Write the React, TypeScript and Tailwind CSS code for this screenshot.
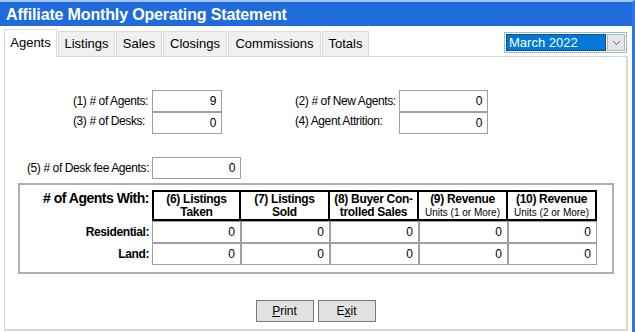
import * as React from "react";

const tabs = [
  { label: "Agents", w: "w-[53px]" },
  { label: "Listings", w: "w-[57px]" },
  { label: "Sales", w: "w-[46px]" },
  { label: "Closings", w: "w-[64px]" },
  { label: "Commissions", w: "w-[93px]" },
  { label: "Totals", w: "w-[47px]" },
];

const headers: { top: string; bottom: string; small?: boolean }[] = [
  { top: "(6) Listings", bottom: "Taken" },
  { top: "(7) Listings", bottom: "Sold" },
  { top: "(8) Buyer Con-", bottom: "trolled Sales" },
  { top: "(9) Revenue", bottom: "Units (1 or More)", small: true },
  { top: "(10) Revenue", bottom: "Units (2 or More)", small: true },
];

function NumBox({ value, className }: { value: string; className: string }) {
  return (
    <div
      className={`h-[22px] border border-[#a0a0a0] bg-white text-right pr-[5px] text-[12px] leading-[20px] text-black ${className}`}
    >
      {value}
    </div>
  );
}

export default function App() {
  const [tab, setTab] = React.useState("Agents");

  return (
    <div className="w-[635px] h-[332px] bg-white border-t-2 border-t-[#9fc5f0] border-r-[3px] border-r-[#2a75e0] font-['Liberation_Sans',Arial,sans-serif] text-black overflow-hidden">
      {/* title bar */}
      <div className="h-[24px] bg-[#1f6bdc] pl-[6px] pt-[1px] text-white font-bold text-[16px] leading-[24px] tracking-[-0.15px]">
        Affiliate Monthly Operating Statement
      </div>

      {/* tabs + month */}
      <div className="h-[30px] flex items-end pl-[4px] pr-[5px]">
        <div className="flex items-end gap-[1px]">
          {tabs.map((t) =>
            t.label === tab ? (
              <button
                key={t.label}
                onClick={() => setTab(t.label)}
                className={`${t.w} h-[28px] -mb-px relative z-10 bg-white border border-b-0 border-[#d9d9d9] text-[13px] leading-[25px] pb-[2px] text-center`}
              >
                {t.label}
              </button>
            ) : (
              <button
                key={t.label}
                onClick={() => setTab(t.label)}
                className={`${t.w} h-[25px] bg-[#f0f0f0] border border-b-0 border-[#d9d9d9] text-[13px] leading-[24px] text-center`}
              >
                {t.label}
              </button>
            )
          )}
        </div>
        <div className="ml-auto self-start mt-[6px] flex h-[21px] w-[123px] border border-[#8cbcec] bg-white">
          <div className="flex-1 m-[1px] bg-[#0078d7] border border-dotted border-[#222] text-white text-[13px] leading-[15px] pl-[2px]">
            March 2022
          </div>
          <div className="w-[18px] my-[1px] mr-[1px] bg-[#e5e5e5] border border-[#b5b5b5] flex items-center justify-center">
            <svg width="9" height="6" viewBox="0 0 9 6">
              <path d="M1 1l3.5 3.5L8 1" fill="none" stroke="#606060" strokeWidth="1" />
            </svg>
          </div>
        </div>
      </div>

      {/* panel */}
      <div className="ml-[4px] w-[624px] h-[275px] border border-r-2 border-b-2 border-[#d7d7d7] pt-[33px] flex flex-col">
        {/* rows 1-4 */}
        <div className="flex text-[12px] tracking-[-0.4px]">
          <div className="ml-[68px] flex flex-col">
            <div className="flex">
              <div className="w-[79px] leading-[22px]">(1) # of Agents:</div>
              <NumBox value="9" className="w-[70px]" />
            </div>
            <div className="flex">
              <div className="w-[79px] leading-[18px] self-start">(3) # of Desks:</div>
              <NumBox value="0" className="w-[70px]" />
            </div>
          </div>
          <div className="ml-[73px] flex flex-col">
            <div className="flex">
              <div className="w-[104px] leading-[22px]">(2) # of New Agents:</div>
              <NumBox value="0" className="w-[89px]" />
            </div>
            <div className="flex">
              <div className="w-[104px] leading-[18px] self-start">(4) Agent Attrition:</div>
              <NumBox value="0" className="w-[89px]" />
            </div>
          </div>
        </div>

        {/* row 5 */}
        <div className="flex mt-[23px] ml-[22px] text-[12px] tracking-[-0.4px]">
          <div className="w-[125px] leading-[22px]">(5) # of Desk fee Agents:</div>
          <NumBox value="0" className="w-[89px]" />
        </div>

        {/* agents with group */}
        <div className="mt-[4px] ml-[13px] w-[596px] border-2 border-[#b0b0b0] pt-[5px] pb-[7px]">
          <div className="grid grid-cols-[132px_repeat(5,89px)]">
            <div className="text-right pr-[3px] font-bold text-[14px] leading-[16px] tracking-[-0.5px]">
              # of Agents With:
            </div>
            {headers.map((h, i) => (
              <div
                key={h.top}
                className={`h-[31px] border-y-2 border-r-2 border-black ${i === 0 ? "border-l-2" : ""} flex flex-col items-center justify-center`}
              >
                <div className="font-bold text-[12px] leading-[13px] tracking-[-0.3px]">{h.top}</div>
                {h.small ? (
                  <div className="text-[10px] leading-[13px]">{h.bottom}</div>
                ) : (
                  <div className="font-bold text-[12px] leading-[13px] tracking-[-0.3px]">{h.bottom}</div>
                )}
              </div>
            ))}

            {["Residential:", "Land:"].map((row) => (
              <React.Fragment key={row}>
                <div className="text-right pr-[3px] font-bold text-[12px] leading-[22px] tracking-[-0.4px]">
                  {row}
                </div>
                {headers.map((h) => (
                  <NumBox key={h.top} value="0" className="w-[89px]" />
                ))}
              </React.Fragment>
            ))}
          </div>
        </div>

        {/* buttons */}
        <div className="mt-[26px] flex justify-center gap-[4px] text-[12px]">
          <button className="w-[58px] h-[22px] bg-[#e1e1e1] border border-[#7a7a7a] leading-[20px]">
            <span className="underline">P</span>rint
          </button>
          <button className="w-[58px] h-[22px] bg-[#e1e1e1] border border-[#7a7a7a] leading-[20px]">
            E<span className="underline">x</span>it
          </button>
        </div>
      </div>
    </div>
  );
}
